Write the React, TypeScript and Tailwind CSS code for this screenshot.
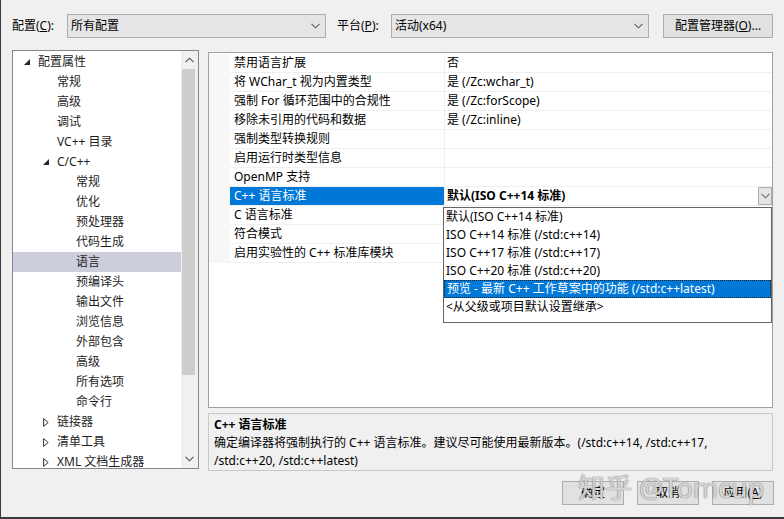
import React from "react";

type TreeItem = { label: string; level: 0 | 1 | 2; arrow?: "open" | "closed"; selected?: boolean };

const tree: TreeItem[] = [
  { label: "配置属性", level: 0, arrow: "open" },
  { label: "常规", level: 1 },
  { label: "高级", level: 1 },
  { label: "调试", level: 1 },
  { label: "VC++ 目录", level: 1 },
  { label: "C/C++", level: 1, arrow: "open" },
  { label: "常规", level: 2 },
  { label: "优化", level: 2 },
  { label: "预处理器", level: 2 },
  { label: "代码生成", level: 2 },
  { label: "语言", level: 2, selected: true },
  { label: "预编译头", level: 2 },
  { label: "输出文件", level: 2 },
  { label: "浏览信息", level: 2 },
  { label: "外部包含", level: 2 },
  { label: "高级", level: 2 },
  { label: "所有选项", level: 2 },
  { label: "命令行", level: 2 },
  { label: "链接器", level: 1, arrow: "closed" },
  { label: "清单工具", level: 1, arrow: "closed" },
  { label: "XML 文档生成器", level: 1, arrow: "closed" },
];

const indent = ["pl-[9px]", "pl-[28px]", "pl-[47px]"];

const rows: [string, string][] = [
  ["禁用语言扩展", "否"],
  ["将 WChar_t 视为内置类型", "是 (/Zc:wchar_t)"],
  ["强制 For 循环范围中的合规性", "是 (/Zc:forScope)"],
  ["移除未引用的代码和数据", "是 (/Zc:inline)"],
  ["强制类型转换规则", ""],
  ["启用运行时类型信息", ""],
  ["OpenMP 支持", ""],
  ["C++ 语言标准", "默认(ISO C++14 标准)"],
  ["C 语言标准", ""],
  ["符合模式", ""],
  ["启用实验性的 C++ 标准库模块", ""],
];

const options = [
  "默认(ISO C++14 标准)",
  "ISO C++14 标准 (/std:c++14)",
  "ISO C++17 标准 (/std:c++17)",
  "ISO C++20 标准 (/std:c++20)",
  "预览 - 最新 C++ 工作草案中的功能 (/std:c++latest)",
  "<从父级或项目默认设置继承>",
];

function Chevron({ up = false, color = "#606060" }: { up?: boolean; color?: string }) {
  return (
    <svg width="9" height="6" viewBox="0 0 9 6" className={up ? "rotate-180" : ""}>
      <path d="M0.5 0.8 L4.5 4.8 L8.5 0.8" stroke={color} strokeWidth="1.1" fill="none" />
    </svg>
  );
}

function TreeArrow({ kind }: { kind?: "open" | "closed" }) {
  if (kind === "open")
    return (
      <svg width="6" height="6" viewBox="0 0 6 6" className="ml-[2px]">
        <polygon points="6,0 6,6 0,6" fill="#262626" />
      </svg>
    );
  if (kind === "closed")
    return (
      <svg width="6" height="9" viewBox="0 0 6 9" className="ml-[2px]">
        <path d="M0.6 0.6 L5.2 4.5 L0.6 8.4 Z" stroke="#333" strokeWidth="1" fill="none" />
      </svg>
    );
  return null;
}

function Combo({ text, width }: { text: string; width: string }) {
  return (
    <div className={`${width} h-[24px] flex items-center justify-between bg-[#e5e5e5] border border-[#adadad] pl-[3px] pr-[5px]`}>
      <span>{text}</span>
      <Chevron />
    </div>
  );
}

function Button({ children }: { children: React.ReactNode }) {
  return (
    <div className="w-[62px] h-[24px] flex items-center justify-center bg-[#e1e1e1] border border-[#adadad]">
      {children}
    </div>
  );
}

export default function App() {
  return (
    <div className="relative w-[784px] h-[519px] overflow-hidden bg-[#f0f0f0] border-l border-b-2 border-[#3c3c3c] text-[12px] leading-none text-black font-['Noto_Sans','Noto_Sans_CJK_SC',sans-serif]">
      {/* top bar */}
      <div className="flex items-center pt-[14px] pl-[11px]">
        <span className="w-[55px]">
          配置(<u>C</u>):
        </span>
        <Combo text="所有配置" width="w-[259px]" />
        <span className="ml-[11px] w-[54px]">
          平台(<u>P</u>):
        </span>
        <Combo text="活动(x64)" width="w-[258px]" />
        <div className="ml-[14px] w-[110px] h-[24px] flex items-center justify-center bg-[#e1e1e1] border border-[#adadad]">
          配置管理器(<u>O</u>)...
        </div>
      </div>

      {/* main area */}
      <div className="flex pl-[11px] mt-[12px]">
        {/* tree */}
        <div className="w-[187px] h-[419px] bg-white border border-[#828790] flex overflow-hidden">
          <div className="w-[168px] pt-[1px]">
            {tree.map((t, i) => (
              <div
                key={i}
                className={`h-[20px] flex items-center text-[#1e1e1e] ${indent[t.level]} ${t.selected ? "bg-[#cccedb]" : ""}`}
              >
                <div className="w-[16px] flex items-center">
                  <TreeArrow kind={t.arrow} />
                </div>
                <span>{t.label}</span>
              </div>
            ))}
          </div>
          <div className="w-[17px] flex flex-col bg-[#f0f0f0]">
            <div className="h-[17px] flex items-center justify-center">
              <Chevron up color="#505050" />
            </div>
            <div className="ml-[1px] mt-[1px] w-[13px] h-[306px] bg-[#cdcdcd]" />
            <div className="flex-1" />
            <div className="h-[17px] flex items-center justify-center mb-[1px]">
              <Chevron color="#505050" />
            </div>
          </div>
        </div>

        {/* right column */}
        <div className="ml-[9px] mt-[2px] w-[565px] flex flex-col">
          <div className="relative h-[356px] bg-white border border-[#a0a0a0] pt-[1px]">
            {rows.map(([name, value], i) => {
              const sel = i === 7;
              return (
                <div key={i} className="h-[19px] flex">
                  <div className="w-[21px] bg-[#f7f7f7]" />
                  <div className="w-[214px] border-b border-[#f0f0f0]">
                    <div className={`h-[18px] flex items-center pl-[4px] ${sel ? "bg-[#0078d7] text-white" : ""}`}>
                      {name}
                    </div>
                  </div>
                  <div className="flex-1 border-l border-b border-[#f0f0f0] h-[19px]">
                    <div className={`h-[18px] flex items-center justify-between pl-[2px] ${sel ? "font-bold" : ""}`}>
                      <span>{value}</span>
                      {sel && (
                        <div className="w-[14px] h-[18px] bg-[#e5e5e5] border border-[#adadad] flex items-center justify-center">
                          <Chevron color="#707070" />
                        </div>
                      )}
                    </div>
                  </div>
                </div>
              );
            })}

            {/* open dropdown */}
            <div className="absolute left-[234px] top-[154px] w-[329px] h-[116px] bg-white border border-[#646464] pb-[6px]">
              {options.map((o, i) => (
                <div
                  key={i}
                  className={`h-[18px] flex items-center pl-[2px] ${
                    i === 4 ? "bg-[#0078d7] text-white border border-dotted border-[#202020]" : ""
                  }`}
                >
                  {o}
                </div>
              ))}
            </div>
          </div>

          {/* description */}
          <div className="mt-[5px] h-[58px] border border-[#c8c8c8] px-[5px] pt-[2px]">
            <div className="h-[18px] flex items-center font-bold">C++ 语言标准</div>
            <div className="leading-[18px]">
              确定编译器将强制执行的 C++ 语言标准。建议尽可能使用最新版本。(/std:c++14, /std:c++17, /std:c++20,
              /std:c++latest)
            </div>
          </div>
        </div>
      </div>

      {/* buttons */}
      <div className="flex justify-end gap-[13px] pr-[10px] mt-[10px]">
        <Button>确定</Button>
        <Button>取消</Button>
        <Button>
          应用(<u>A</u>)
        </Button>
      </div>

      {/* watermark */}
      <div className="absolute left-[577px] top-[474px] text-[27px] leading-none text-white/70 [text-shadow:0_0_1px_#777,0_0_1px_#777] pointer-events-none">
        知乎 @Tomcup
      </div>
    </div>
  );
}
